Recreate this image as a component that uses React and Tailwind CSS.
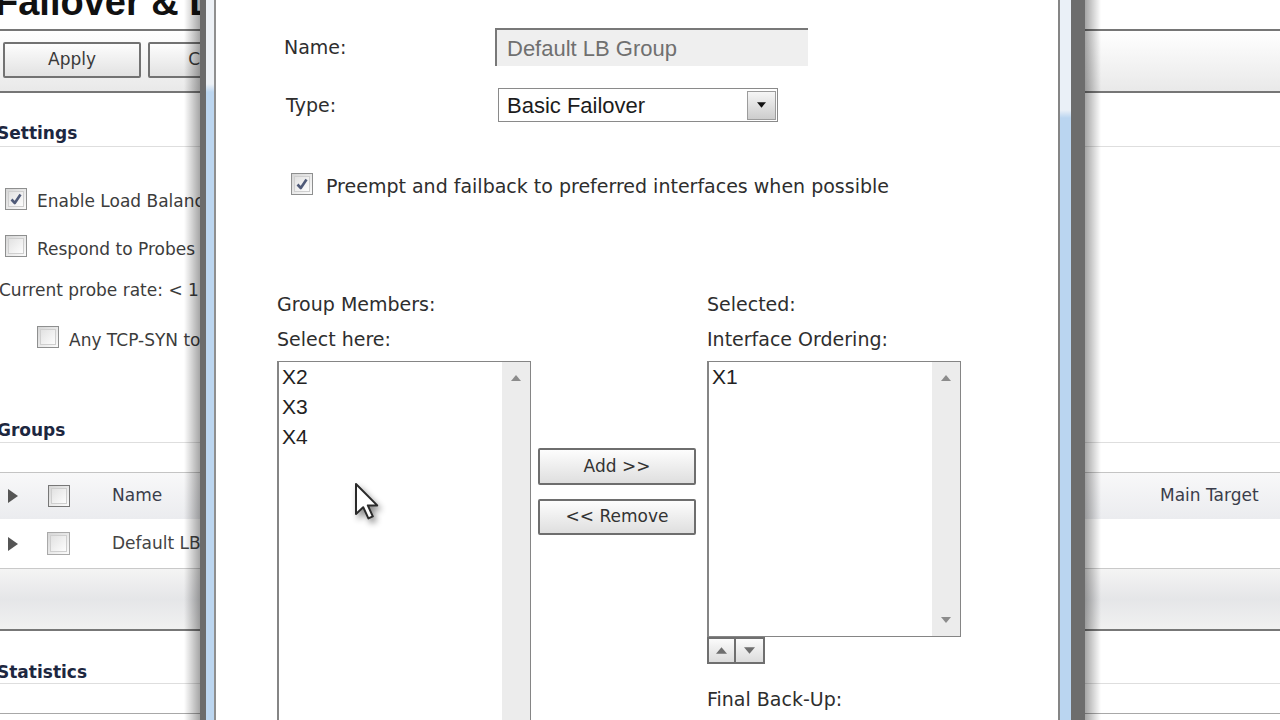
import React from 'react';

const Check = ({ checked, className = '' }) => (
  <span className={`inline-flex shrink-0 border border-[#8e8f8f] bg-gradient-to-br from-[#d6d6d6] to-[#fbfbfb] p-[2px] ${className}`}>
    <span className="flex-1 flex items-center justify-center border border-[#cfcfcf] bg-gradient-to-br from-[#e2e2e2] to-[#fdfdfd]">
      {checked && (
        <svg width="14" height="14" viewBox="0 0 14 14">
          <path d="M2.5 7.5 L5.8 11 L11.5 2.5" fill="none" stroke="#4f5a78" strokeWidth="2.6" strokeLinejoin="round" />
        </svg>
      )}
    </span>
  </span>
);

const Tri = ({ dir = 'up', color = '#8c8c8c', w = 10, h = 6 }) => (
  <svg width={w} height={h} viewBox="0 0 10 6">
    <polygon points={dir === 'up' ? '0,6 10,6 5,0' : '0,0 10,0 5,6'} fill={color} />
  </svg>
);

const Expand = () => (
  <svg width="10" height="14" viewBox="0 0 10 14">
    <polygon points="0,0 10,7 0,14" fill="#555" />
  </svg>
);

const PageButton = ({ children, className = '' }) => (
  <div className={`h-[36px] w-[138px] shrink-0 border-2 border-[#727272] rounded-[2px] bg-gradient-to-b from-[#fdfdfd] to-[#e2e2e2] flex items-center justify-center text-[17px] text-[#3a3a3a] ${className}`}>
    {children}
  </div>
);

const PageStrip = ({ side }) => {
  const left = side === 'left';
  return (
    <div className={`relative h-full overflow-hidden bg-white font-['DejaVu_Sans',sans-serif] text-[#3c3c3c] ${left ? 'w-[200px] shrink-0' : 'flex-1'}`}>
      {/* title */}
      <div className="h-[31px] border-b-2 border-[#767676] overflow-hidden">
        {left && (
          <div className="-mt-[17px] -ml-[5px] whitespace-nowrap font-['Liberation_Sans',Arial,sans-serif] text-[38px] font-bold leading-none text-[#111]">
            Failover &amp; Load Balancing
          </div>
        )}
      </div>
      {/* toolbar */}
      <div className="h-[62px] border-b-2 border-[#767676] bg-gradient-to-b from-white to-[#e9e9e9] pt-[11px]">
        {left && (
          <div className="flex gap-[7px] pl-[3px]">
            <PageButton>Apply</PageButton>
            <PageButton>Cancel</PageButton>
          </div>
        )}
      </div>
      {/* settings heading */}
      <div className="h-[54px] border-b border-[#dedede] pt-[30px]">
        {left && <div className="-ml-[3px] text-[17px] font-bold leading-[20px] text-[#1d2740]">Settings</div>}
      </div>
      {/* settings content */}
      <div className="h-[296px] border-b border-[#dedede] pt-[41px] whitespace-nowrap text-[17px]">
        {left && (
          <>
            <div className="flex items-center h-[22px] pl-[5px] gap-[10px]">
              <Check checked className="w-[22px] h-[22px]" />
              <span className="mt-[6px]">Enable Load Balancing</span>
            </div>
            <div className="flex items-center h-[22px] mt-[25px] pl-[5px] gap-[10px]">
              <Check className="w-[22px] h-[22px]" />
              <span className="mt-[8px]">Respond to Probes</span>
            </div>
            <div className="flex items-center h-[22px] mt-[23px] -ml-[1px]">Current probe rate: &lt; 1</div>
            <div className="flex items-center h-[22px] mt-[24px] pl-[37px] gap-[10px]">
              <Check className="w-[22px] h-[22px]" />
              <span className="mt-[8px]">Any TCP-SYN to Port</span>
            </div>
            <div className="mt-[72px] -ml-[3px] text-[17px] font-bold leading-[20px] text-[#1d2740]">Groups</div>
          </>
        )}
      </div>
      <div className="h-[29px]" />
      {/* table header */}
      <div className="h-[47px] border-t border-[#c4c4c4] bg-gradient-to-b from-[#f8f8f9] to-[#ebecef] flex items-center text-[17px] text-[#3a3d4b] whitespace-nowrap">
        {left ? (
          <>
            <span className="ml-[8px] flex"><Expand /></span>
            <Check className="ml-[30px] w-[22px] h-[22px] border-[#777]" />
            <span className="ml-[42px]">Name</span>
          </>
        ) : (
          <span className="ml-[75px]">Main Target</span>
        )}
      </div>
      {/* row */}
      <div className="h-[50px] border-b border-[#c9c9c9] flex items-center text-[17px] text-[#444] whitespace-nowrap">
        {left && (
          <>
            <span className="ml-[8px] flex"><Expand /></span>
            <Check className="ml-[29px] w-[23px] h-[23px] border-[#a9a9a9]" />
            <span className="ml-[42px]">Default LB Group</span>
          </>
        )}
      </div>
      <div className="h-[62px] border-b-2 border-[#777] bg-gradient-to-b from-[#f4f4f4] via-[#e5e6e8] to-[#f1f1f1]" />
      <div className="h-[53px] border-b border-[#dedede] pt-[31px]">
        {left && <div className="-ml-[3px] text-[17px] font-bold leading-[20px] text-[#1d2740]">Statistics</div>}
      </div>
      <div className="h-[30px] border-b border-[#a8a8a8]" />
      {/* shadow cast by the dialog */}
      <div
        className={`absolute inset-y-0 w-[16px] ${left ? 'right-0 bg-gradient-to-l' : 'left-0 bg-gradient-to-r'} from-black/35 to-transparent`}
      />
    </div>
  );
};

const ListBox = ({ items, className = '', down }) => (
  <div className={`flex border border-l-2 border-[#858585] bg-white ${className}`}>
    <div className="flex-1 pl-[3px] font-['Liberation_Sans',Arial,sans-serif] text-[21px] leading-[30px] text-[#222]">
      {items.map((it) => (
        <div key={it}>{it}</div>
      ))}
    </div>
    <div className="w-[28px] bg-[#ececec] flex flex-col items-center pt-[13px] pb-[13px] justify-between">
      <Tri dir="up" />
      {down && <Tri dir="down" />}
    </div>
  </div>
);

const DialogButton = ({ children, className = '' }) => (
  <div className={`w-[158px] border-2 border-[#6e6e6e] rounded-[2px] bg-gradient-to-b from-[#fdfdfd] to-[#dfdfdf] flex items-center justify-center text-[17px] text-[#333] ${className}`}>
    {children}
  </div>
);

const Dialog = () => (
  <div className="w-[885px] h-full shrink-0 flex">
    <div className="w-[6px] bg-[#6b6b6b]" />
    <div className="w-[8px] bg-[linear-gradient(to_bottom,#edf1f6_0px,#edf1f6_84px,#bcd6f0_92px,#bcd6f0_100%)]" />
    <div className="w-[2px] bg-[#8f8f8f]" />
    <div className="flex-1 bg-white overflow-hidden font-['DejaVu_Sans',sans-serif] text-[#2e2e2e] text-[19px] whitespace-nowrap">
      <div className="pt-[28px] pl-[68px]">
        <div className="flex items-center h-[38px]">
          <div className="w-[211px]">Name:</div>
          <div className="w-[313px] h-[38px] bg-[#efefef] border-t-2 border-l-2 border-[#787878] pl-[10px] flex items-center font-['Liberation_Sans',Arial,sans-serif] text-[22px] text-[#707070]">
            Default LB Group
          </div>
        </div>
        <div className="flex items-center h-[34px] mt-[22px]">
          <div className="w-[214px] pl-[2px]">Type:</div>
          <div className="w-[280px] h-[34px] border border-[#8a8a8a] bg-white flex items-center">
            <span className="flex-1 pl-[8px] font-['Liberation_Sans',Arial,sans-serif] text-[22px] text-[#1c1c1c]">Basic Failover</span>
            <span className="w-[29px] h-[29px] mr-[1px] border border-[#9c9c9c] bg-gradient-to-b from-[#f6f6f6] to-[#cdcdcd] flex items-center justify-center">
              <Tri dir="down" color="#111" w={9} h={6} />
            </span>
          </div>
        </div>
        <div className="flex items-center h-[22px] mt-[51px] pl-[7px] gap-[13px]">
          <Check checked className="w-[22px] h-[22px]" />
          <span className="mt-[4px]">Preempt and failback to preferred interfaces when possible</span>
        </div>
      </div>

      <div className="flex items-start pl-[61px] mt-[92px]">
        <div className="w-[254px]">
          <div className="leading-[35px]">Group Members:</div>
          <div className="leading-[35px]">Select here:</div>
          <ListBox items={['X2', 'X3', 'X4']} className="mt-[4px] h-[400px]" />
        </div>
        <div className="ml-[7px] pt-[161px]">
          <DialogButton className="h-[37px]">Add &gt;&gt;</DialogButton>
          <DialogButton className="h-[36px] mt-[14px]">&lt;&lt; Remove</DialogButton>
        </div>
        <div className="ml-[11px] w-[254px]">
          <div className="leading-[35px]">Selected:</div>
          <div className="leading-[35px]">Interface Ordering:</div>
          <ListBox items={['X1']} down className="mt-[4px] h-[276px]" />
          <div className="flex">
            <span className="w-[29px] h-[27px] border-2 border-[#6f6f6f] bg-gradient-to-b from-[#fbfbfb] to-[#dcdcdc] flex items-center justify-center">
              <Tri dir="up" color="#6e6e6e" w={11} h={7} />
            </span>
            <span className="w-[29px] h-[27px] border-2 border-l-0 border-[#6f6f6f] bg-gradient-to-b from-[#fbfbfb] to-[#dcdcdc] flex items-center justify-center">
              <Tri dir="down" color="#6e6e6e" w={11} h={7} />
            </span>
          </div>
          <div className="mt-[18px] leading-[35px]">Final Back-Up:</div>
        </div>
      </div>
    </div>
    <div className="w-[2px] bg-[#858585]" />
    <div className="w-[11px] bg-[linear-gradient(to_bottom,#eaf0f7_0px,#eaf0f7_110px,#bad5f0_118px,#bad5f0_100%)]" />
    <div className="w-[14px] bg-[#6d6d6d]" />
  </div>
);

const Cursor = () => (
  <svg
    className="absolute left-[354px] top-[482px] drop-shadow-[3px_4px_3px_rgba(0,0,0,0.45)]"
    width="26"
    height="38"
    viewBox="0 0 13 19"
  >
    <path d="M1 1 L1 16 L4.6 12.6 L7.2 18.2 L9.4 17.2 L6.9 11.7 L11.6 11.7 Z" fill="#fff" stroke="#2a2a2a" strokeWidth="1" strokeLinejoin="round" />
  </svg>
);

export default function App() {
  return (
    <div className="relative w-[1280px] h-[720px] overflow-hidden flex bg-white">
      <PageStrip side="left" />
      <Dialog />
      <PageStrip side="right" />
      <Cursor />
    </div>
  );
}
